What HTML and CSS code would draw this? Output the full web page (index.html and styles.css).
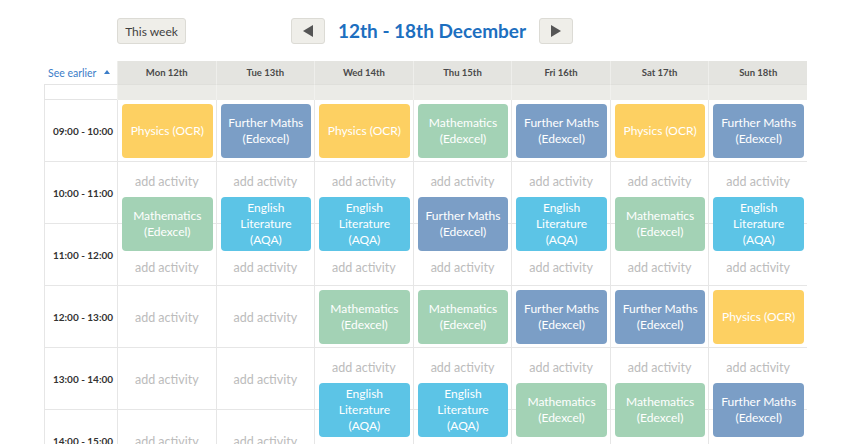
FILE: index.html
```html
<!DOCTYPE html>
<html lang="en">
<head>
<meta charset="utf-8">
<title>Timetable</title>
<link rel="stylesheet" href="styles.css">
</head>
<body>
<div class="page">
  <div class="toolbar">
    <button class="btn this-week">This week</button>
    <div class="nav">
      <button class="btn arrow" aria-label="Previous week"><svg width="10" height="12" viewBox="0 0 10 12"><path d="M10 0 L0 6 L10 12 Z" fill="#555"/></svg></button>
      <h1 class="title">12th - 18th December</h1>
      <button class="btn arrow" aria-label="Next week"><svg width="10" height="12" viewBox="0 0 10 12"><path d="M0 0 L10 6 L0 12 Z" fill="#555"/></svg></button>
    </div>
  </div>

  <div class="calendar">
    <div class="head-row">
      <div class="see-earlier">See earlier <span class="caret"></span></div>
      <div class="day-head">Mon 12th</div>
      <div class="day-head">Tue 13th</div>
      <div class="day-head">Wed 14th</div>
      <div class="day-head">Thu 15th</div>
      <div class="day-head">Fri 16th</div>
      <div class="day-head">Sat 17th</div>
      <div class="day-head">Sun 18th</div>
    </div>
    <div class="sub-row">
      <div class="sub-time"></div>
      <div class="sub-day"></div>
      <div class="sub-day"></div>
      <div class="sub-day"></div>
      <div class="sub-day"></div>
      <div class="sub-day"></div>
      <div class="sub-day"></div>
      <div class="sub-day"></div>
    </div>
    <div class="body">
      <div class="times">
        <div class="time">09:00 - 10:00</div>
        <div class="time">10:00 - 11:00</div>
        <div class="time">11:00 - 12:00</div>
        <div class="time">12:00 - 13:00</div>
        <div class="time">13:00 - 14:00</div>
        <div class="time">14:00 - 15:00</div>
      </div>

      <div class="day">
        <div class="slot"><div class="event physics">Physics (OCR)</div></div>
        <div class="add pre">add activity</div>
        <div class="slot"><div class="event maths">Mathematics<br>(Edexcel)</div></div>
        <div class="add post">add activity</div>
        <div class="add full">add activity</div>
        <div class="add full">add activity</div>
        <div class="add full">add activity</div>
      </div>

      <div class="day">
        <div class="slot"><div class="event further">Further Maths<br>(Edexcel)</div></div>
        <div class="add pre">add activity</div>
        <div class="slot"><div class="event english">English<br>Literature<br>(AQA)</div></div>
        <div class="add post">add activity</div>
        <div class="add full">add activity</div>
        <div class="add full">add activity</div>
        <div class="add full">add activity</div>
      </div>

      <div class="day">
        <div class="slot"><div class="event physics">Physics (OCR)</div></div>
        <div class="add pre">add activity</div>
        <div class="slot"><div class="event english">English<br>Literature<br>(AQA)</div></div>
        <div class="add post">add activity</div>
        <div class="slot"><div class="event maths">Mathematics<br>(Edexcel)</div></div>
        <div class="add pre">add activity</div>
        <div class="slot"><div class="event english">English<br>Literature<br>(AQA)</div></div>
      </div>

      <div class="day">
        <div class="slot"><div class="event maths">Mathematics<br>(Edexcel)</div></div>
        <div class="add pre">add activity</div>
        <div class="slot"><div class="event further">Further Maths<br>(Edexcel)</div></div>
        <div class="add post">add activity</div>
        <div class="slot"><div class="event maths">Mathematics<br>(Edexcel)</div></div>
        <div class="add pre">add activity</div>
        <div class="slot"><div class="event english">English<br>Literature<br>(AQA)</div></div>
      </div>

      <div class="day">
        <div class="slot"><div class="event further">Further Maths<br>(Edexcel)</div></div>
        <div class="add pre">add activity</div>
        <div class="slot"><div class="event english">English<br>Literature<br>(AQA)</div></div>
        <div class="add post">add activity</div>
        <div class="slot"><div class="event further">Further Maths<br>(Edexcel)</div></div>
        <div class="add pre">add activity</div>
        <div class="slot"><div class="event maths">Mathematics<br>(Edexcel)</div></div>
      </div>

      <div class="day">
        <div class="slot"><div class="event physics">Physics (OCR)</div></div>
        <div class="add pre">add activity</div>
        <div class="slot"><div class="event maths">Mathematics<br>(Edexcel)</div></div>
        <div class="add post">add activity</div>
        <div class="slot"><div class="event further">Further Maths<br>(Edexcel)</div></div>
        <div class="add pre">add activity</div>
        <div class="slot"><div class="event maths">Mathematics<br>(Edexcel)</div></div>
      </div>

      <div class="day">
        <div class="slot"><div class="event further">Further Maths<br>(Edexcel)</div></div>
        <div class="add pre">add activity</div>
        <div class="slot"><div class="event english">English<br>Literature<br>(AQA)</div></div>
        <div class="add post">add activity</div>
        <div class="slot"><div class="event physics">Physics (OCR)</div></div>
        <div class="add pre">add activity</div>
        <div class="slot"><div class="event further">Further Maths<br>(Edexcel)</div></div>
      </div>
    </div>
  </div>
</div>
</body>
</html>
```

FILE: styles.css
```css
html, body {
  margin: 0;
  padding: 0;
  background: #ffffff;
  overflow: hidden;
}

body {
  width: 860px;
  height: 444px;
  font-family: Lato, "Open Sans", "DejaVu Sans", sans-serif;
}

.page {
  padding: 18px 0 0 44px;
}

/* ---------- toolbar ---------- */
.toolbar {
  display: flex;
  align-items: center;
  height: 26px;
  margin-left: 73px;
}

.btn {
  box-sizing: border-box;
  height: 26px;
  padding: 0;
  border: 1px solid #dcdbd5;
  border-radius: 3px;
  background: #efeee9;
  font-family: Lato, "Open Sans", sans-serif;
  font-size: 12px;
  color: #3f3f3f;
}

.this-week {
  width: 69px;
}

.nav {
  display: flex;
  align-items: center;
  gap: 12px;
  margin-left: 105px;
}

.arrow {
  width: 34px;
  display: flex;
  align-items: center;
  justify-content: center;
}

.title {
  margin: 0;
  width: 190px;
  text-align: center;
  white-space: nowrap;
  font-size: 19px;
  font-weight: 700;
  color: #1d6fc0;
  line-height: 26px;
}

/* ---------- calendar ---------- */
.calendar {
  margin-top: 17px;
  width: 763px;
}

.head-row,
.sub-row,
.body {
  display: grid;
  grid-template-columns: 73px repeat(7, 1fr);
}

.head-row {
  height: 23px;
}

.see-earlier {
  display: flex;
  align-items: center;
  gap: 8px;
  padding-left: 4px;
  font-size: 10.5px;
  color: #3b7dc8;
}

.caret {
  width: 0;
  height: 0;
  border-left: 3px solid transparent;
  border-right: 3px solid transparent;
  border-bottom: 4px solid #3b7dc8;
  margin-top: -2px;
}

.day-head {
  display: flex;
  align-items: center;
  justify-content: center;
  background: #e4e4e0;
  border-left: 1px solid #eeeeeb;
  font-size: 9.5px;
  font-weight: 700;
  color: #4a4a4a;
}

.sub-row {
  height: 16px;
}

.sub-time {
  box-sizing: border-box;
  border: 1px solid #e4e4e4;
  border-right: none;
}

.sub-day {
  box-sizing: border-box;
  background: #ebebe7;
  border-left: 1px solid #f1f1ee;
  border-top: 1px solid #dfdfdb;
}

.body {
  height: 372px;
}

.times {
  border-left: 1px solid #e6e6e6;
  background: repeating-linear-gradient(to bottom, transparent 0, transparent 61px, #e6e6e6 61px, #e6e6e6 62px);
}

.time {
  box-sizing: border-box;
  height: 62px;
  padding: 0 0 1px 4px;
  display: flex;
  align-items: center;
  justify-content: center;
  font-size: 10px;
  font-weight: 700;
  color: #333;
}

.day {
  display: flex;
  flex-direction: column;
  border-left: 1px solid #e6e6e6;
  background: repeating-linear-gradient(to bottom, transparent 0, transparent 61px, #e6e6e6 61px, #e6e6e6 62px);
}

.slot {
  box-sizing: border-box;
  height: 62px;
  flex: none;
  padding: 4px 3px 4px 4px;
}

.event {
  height: 54px;
  border-radius: 4px;
  display: flex;
  align-items: center;
  justify-content: center;
  text-align: center;
  font-size: 12px;
  line-height: 16px;
  color: #ffffff;
}

.physics { background: #fdd062; }
.further { background: #7b9ec6; }
.maths   { background: #a3d2b5; }
.english { background: #5cc4e6; }

.add {
  box-sizing: border-box;
  flex: none;
  text-align: center;
  font-size: 12.5px;
  line-height: 16px;
  color: #bcbcbc;
}

.add.full {
  height: 62px;
  padding-top: 24px;
}

.add.pre {
  height: 31px;
  padding-top: 12px;
}

.add.post {
  height: 31px;
  padding-top: 5px;
}
```
